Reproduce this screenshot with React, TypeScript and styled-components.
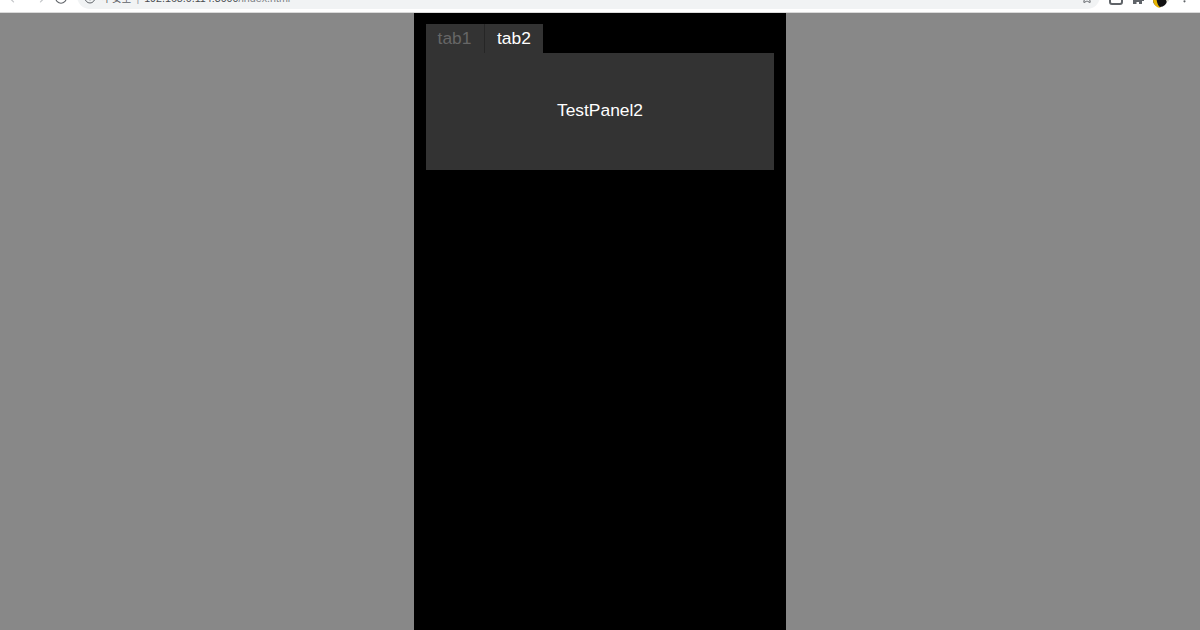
import styled, { createGlobalStyle } from 'styled-components';
import { ArrowLeft, ArrowRight, RotateCw, Info, Star, EllipsisVertical } from 'lucide-react';

const GlobalStyle = createGlobalStyle`
  html, body {
    margin: 0;
    padding: 0;
    height: 100%;
    overflow: hidden;
    background: #888888;
  }
  #root {
    height: 100%;
  }
`;

const Page = styled.div`
  display: flex;
  flex-direction: column;
  width: 1200px;
  height: 630px;
  overflow: hidden;
  font-family: 'Liberation Sans', Arial, sans-serif;
`;

const BrowserClip = styled.div`
  height: 13px;
  flex-shrink: 0;
  overflow: hidden;
  background: #ffffff;
  border-bottom: 1px solid #dadada;
  box-sizing: border-box;
`;

const BrowserBar = styled.div`
  display: flex;
  align-items: flex-end;
  height: 26px;
  margin-top: -17px;
  padding: 0 3px 0 6px;
`;

const NavIcons = styled.div`
  display: grid;
  grid-template-columns: 27px 21px auto;
  align-items: center;
  width: 71px;
  flex-shrink: 0;
  height: 26px;
  padding-top: 3px;
  box-sizing: border-box;
`;

const NavIcon = styled.span<{ $faded?: boolean }>`
  display: flex;
  color: ${(p) => (p.$faded ? '#c4c6c9' : '#5f6368')};
`;

const AddressBar = styled.div`
  display: flex;
  align-items: center;
  flex: 1;
  height: 26px;
  padding: 3px 7px 0;
  box-sizing: border-box;
  border-radius: 13px;
  background: #f1f3f4;
  color: #5f6368;
  font-size: 10.7px;
`;

const Address = styled.span`
  flex: 1;
  display: flex;
  align-items: baseline;
  margin-left: 6px;
`;

const SecurityLabel = styled.span`
  font-family: 'Liberation Sans', 'Noto Sans CJK SC', sans-serif;
  font-size: 9.8px;
`;

const Separator = styled.span`
  margin: 0 5px 0 5px;
  color: #9aa0a6;
`;

const Host = styled.span`
  color: #4a4e52;
`;

const UrlPath = styled.span`
  color: #7d8286;
`;

const ExtensionIcons = styled.div`
  display: grid;
  grid-template-columns: 22px 22px 22px 26px;
  justify-items: center;
  align-items: center;
  height: 26px;
  padding-top: 3px;
  box-sizing: border-box;
  margin-left: 5px;
  color: #5f6368;
`;

const Content = styled.main`
  flex: 1;
  display: flex;
  justify-content: center;
`;

const Phone = styled.div`
  width: 371.2px;
  padding: 11px 11.2px;
  box-sizing: border-box;
  background: #000000;
`;

const TabList = styled.div`
  display: flex;
`;

const Tab = styled.div<{ $active?: boolean }>`
  height: 29px;
  padding: ${(p) => (p.$active ? '0 12px 0 11.5px' : '0 13px 0 12px')};
  background: #333333;
  border-left: ${(p) => (p.$active ? '1px solid #262626' : 'none')};
  color: ${(p) => (p.$active ? '#ffffff' : '#666666')};
  font-size: 17.4px;
  line-height: 29px;
`;

const Panel = styled.div`
  display: flex;
  align-items: center;
  justify-content: center;
  height: 116.5px;
  padding-bottom: 1px;
  box-sizing: border-box;
  background: #333333;
  color: #ffffff;
  font-size: 17.4px;
`;

// the toolbar is cut by the top of the window, so these icons use y = 0 for the page top
const SavePageIcon = () => (
  <svg width="14" height="23" viewBox="0 -14 14 23" fill="none" stroke="#5f6368" strokeWidth="2">
    <path d="M1-5v7a2 2 0 0 0 2 2h8a2 2 0 0 0 2-2v-7" />
  </svg>
);

const PuzzleIcon = () => (
  <svg width="14" height="23" viewBox="0 -14 14 23" fill="#5f6368">
    <path d="M2-8h9v6h2v3h-2v3H8V2H5.500v2H2z" />
  </svg>
);

const Avatar = () => (
  <svg width="18" height="23" viewBox="0 -14 18 23">
    <circle cx="9" cy="0" r="7" fill="#111111" />
    <path d="M2-1c0 5 3.500 9 8 9-2.500-1.500-4-4.500-4.500-9z" fill="#e8b400" />
    <circle cx="16.500" cy="0" r="1.500" fill="#d8d8c8" />
  </svg>
);

export default function App() {
  return (
    <Page>
      <GlobalStyle />
      <BrowserClip>
        <BrowserBar>
          <NavIcons>
            <NavIcon $faded><ArrowLeft size={15} /></NavIcon>
            <NavIcon $faded><ArrowRight size={15} /></NavIcon>
            <NavIcon><RotateCw size={14} /></NavIcon>
          </NavIcons>
          <AddressBar>
            <Info size={12} />
            <Address>
              <SecurityLabel>不安全</SecurityLabel>
              <Separator>|</Separator>
              <Host>192.168.0.114:3000</Host>
              <UrlPath>/index.html</UrlPath>
            </Address>
            <Star size={12} />
          </AddressBar>
          <ExtensionIcons>
            <SavePageIcon />
            <PuzzleIcon />
            <Avatar />
            <EllipsisVertical size={13} />
          </ExtensionIcons>
        </BrowserBar>
      </BrowserClip>
      <Content>
        <Phone>
          <TabList>
            <Tab>tab1</Tab>
            <Tab $active>tab2</Tab>
          </TabList>
          <Panel>TestPanel2</Panel>
        </Phone>
      </Content>
    </Page>
  );
}
